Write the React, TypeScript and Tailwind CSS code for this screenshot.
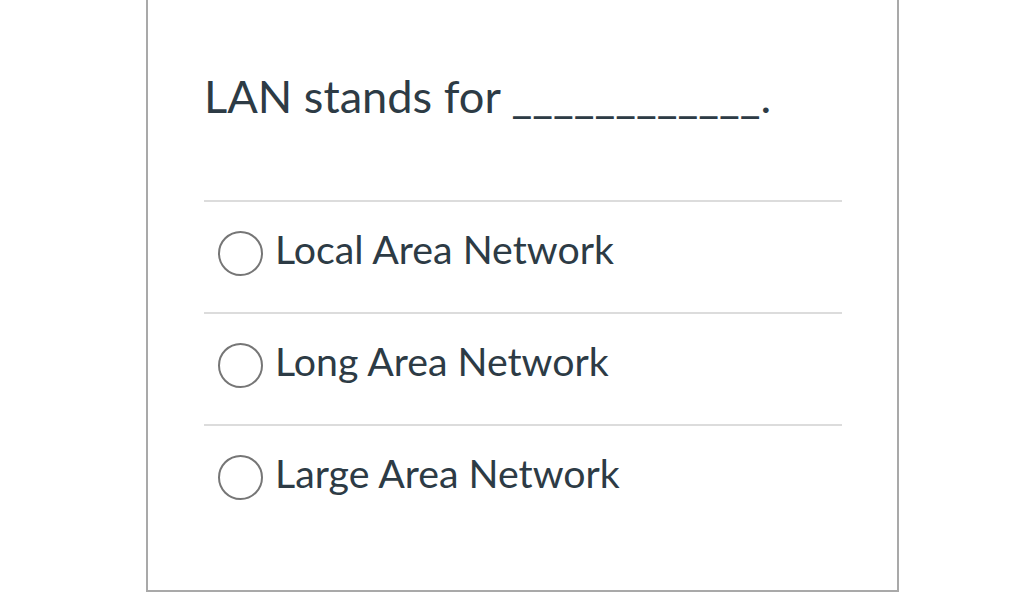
import React from "react";

const options = ["Local Area Network", "Long Area Network", "Large Area Network"];

export default function App() {
  return (
    <div className="w-[1013px] h-[604px] bg-white" style={{ fontFamily: "Lato, 'Noto Sans', sans-serif" }}>
      <div className="ml-[146px] w-[753px] h-[592px] border-x-2 border-b-2 border-[#a9a9a9] pl-[56px] pr-[55px]">
        <div className="pt-[69px] text-[45.2px] leading-[54px] text-[#2d3b45]">
          LAN stands for ____________.
        </div>
        <div className="mt-[77px]">
          {options.map((o) => (
            <div key={o} className="h-[112px] border-t-2 border-[#dcdcdc] flex items-start pt-[24px]">
              <div className="ml-[14px] mt-[5px] w-[45px] h-[45px] rounded-full border-2 border-[#767676] shrink-0" />
              <div className="ml-[12px] text-[39.3px] leading-[45px] text-[#2d3b45]">{o}</div>
            </div>
          ))}
        </div>
      </div>
    </div>
  );
}
